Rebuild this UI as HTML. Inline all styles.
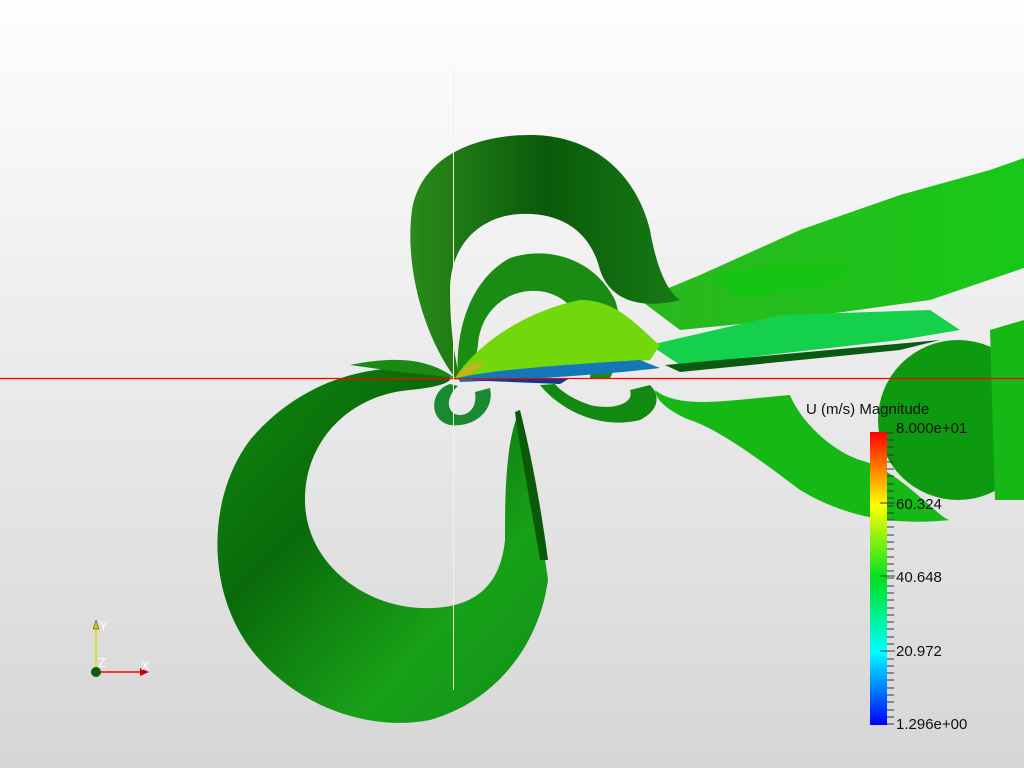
<!DOCTYPE html>
<html><head><meta charset="utf-8"><style>
html,body{margin:0;padding:0}
body{width:1024px;height:768px;overflow:hidden;background:linear-gradient(#fefefe,#d6d6d6);font-family:"Liberation Sans",sans-serif}
svg{position:absolute;left:0;top:0}
.t{font-size:15px;fill:#111}
</style></head><body>
<svg width="1024" height="768" viewBox="0 0 1024 768">
<defs>
<linearGradient id="big" x1="0" y1="0" x2="1" y2="1">
<stop offset="0" stop-color="#0f8a0f"/><stop offset="0.35" stop-color="#0a6a0a"/><stop offset="0.7" stop-color="#18a018"/><stop offset="1" stop-color="#10901a"/></linearGradient>
<linearGradient id="top" x1="0" y1="0" x2="1" y2="0">
<stop offset="0" stop-color="#2a8a1a"/><stop offset="0.5" stop-color="#0a5a0a"/><stop offset="1" stop-color="#177a15"/></linearGradient>
<linearGradient id="wake" x1="0" y1="0" x2="1" y2="0">
<stop offset="0" stop-color="#2ab81e"/><stop offset="1" stop-color="#18c818"/></linearGradient>
<linearGradient id="bar" x1="0" y1="1" x2="0" y2="0">
<stop offset="0" stop-color="#0000ff"/><stop offset="0.25" stop-color="#00ffff"/><stop offset="0.5" stop-color="#00e020"/><stop offset="0.75" stop-color="#ffff00"/><stop offset="1" stop-color="#ff0000"/></linearGradient>
</defs>
<path d="M640 300 L700 275 L800 230 L900 195 L990 170 L1024 158 L1024 268 L930 300 L800 318 L680 330 Z" fill="url(#wake)"/>
<path d="M712 278 C750 262 820 262 858 268 L830 285 L740 298 Z" fill="#16c414"/>
<path d="M650 345 L780 315 L930 310 L960 330 L900 340 L680 365 Z" fill="#14d04a"/>
<path d="M665 365 L940 340 L900 350 L680 372 Z" fill="#0a5a12"/>
<path d="M655 390 C680 410 730 400 790 395 C800 420 830 450 860 460 C900 470 940 520 950 520 C900 525 850 520 800 490 C760 460 720 430 690 420 C670 412 655 400 655 390 Z" fill="#16b816"/>
<circle cx="958" cy="420" r="80" fill="#0e9a10"/>
<path d="M990 330 L1024 320 L1024 500 L995 500 Z" fill="#16b816"/>
<path fill-rule="evenodd" fill="url(#big)" d="M450 375 C380 355 300 380 250 440 C205 500 205 600 260 660 C310 715 380 730 430 720 C500 700 540 640 548 580 C540 520 528 470 520 410 C505 440 505 500 505 540 C500 590 470 610 420 608 C360 605 305 560 305 500 C305 440 350 395 410 390 C430 388 445 385 450 380 Z"/>
<path d="M350 365 C400 355 430 360 455 378 L400 372 Z" fill="#1a8a14"/>
<path fill-rule="evenodd" fill="url(#top)" d="M455 378 C420 330 405 260 412 210 C420 160 470 135 530 135 C590 135 635 170 650 230 C655 260 665 290 680 300 C640 310 610 300 600 270 C590 230 560 212 520 214 C480 216 450 245 450 290 C450 330 455 360 460 378 Z"/>
<path fill-rule="evenodd" fill="#1a8c14" d="M458 378 C455 330 470 280 510 258 C550 245 595 260 615 300 C625 330 620 360 610 378 L590 378 C595 340 580 300 545 292 C510 285 480 310 478 345 C476 360 470 372 465 378 Z"/>
<path d="M455 378 C480 340 530 310 580 300 C620 300 640 330 660 345 L650 360 C600 365 520 372 455 380 Z" fill="#72d80c"/>
<path d="M458 378 C490 370 560 365 640 360 L660 368 C600 375 520 380 460 382 Z" fill="#1478b8"/>
<path d="M462 380 L570 378 L560 384 Z" fill="#0a3a8a"/>
<path d="M455 378 C465 365 475 362 485 362 L470 374 Z" fill="#c8b020"/>
<path fill-rule="evenodd" fill="#1a8a30" d="M450 384 C430 390 428 420 450 425 C475 428 495 410 490 388 L475 392 C478 410 465 418 455 414 C445 408 448 395 458 386 Z"/>
<path d="M520 410 C530 450 540 500 548 560 L540 560 C530 500 520 450 515 412 Z" fill="#0a5a0a"/>
<path fill-rule="evenodd" fill="#128a12" d="M540 385 C560 410 600 430 640 420 C660 410 660 395 650 385 L630 390 C635 405 610 410 590 405 C570 398 560 390 555 384 Z"/>
<line x1="0" y1="378.5" x2="1024" y2="378.5" stroke="#ff0000" stroke-width="1.3"/>
<line x1="453.5" y1="68" x2="453.5" y2="690" stroke="#f4f4d0" stroke-width="1"/>
<text x="806" y="414" class="t">U (m/s) Magnitude</text>
<rect x="870" y="432" width="17" height="293" fill="url(#bar)"/>
<g stroke="#333" stroke-width="1">
<line x1="887" y1="433" x2="894" y2="433"/><line x1="887" y1="440" x2="894" y2="440"/><line x1="887" y1="447" x2="894" y2="447"/><line x1="887" y1="455" x2="894" y2="455"/><line x1="887" y1="462" x2="894" y2="462"/><line x1="887" y1="469" x2="894" y2="469"/><line x1="887" y1="476" x2="894" y2="476"/><line x1="887" y1="484" x2="894" y2="484"/><line x1="887" y1="491" x2="894" y2="491"/><line x1="887" y1="498" x2="894" y2="498"/><line x1="887" y1="506" x2="894" y2="506"/><line x1="887" y1="513" x2="894" y2="513"/><line x1="887" y1="520" x2="894" y2="520"/><line x1="887" y1="527" x2="894" y2="527"/><line x1="887" y1="535" x2="894" y2="535"/><line x1="887" y1="542" x2="894" y2="542"/><line x1="887" y1="549" x2="894" y2="549"/><line x1="887" y1="557" x2="894" y2="557"/><line x1="887" y1="564" x2="894" y2="564"/><line x1="887" y1="571" x2="894" y2="571"/><line x1="887" y1="578" x2="894" y2="578"/><line x1="887" y1="586" x2="894" y2="586"/><line x1="887" y1="593" x2="894" y2="593"/><line x1="887" y1="600" x2="894" y2="600"/><line x1="887" y1="608" x2="894" y2="608"/><line x1="887" y1="615" x2="894" y2="615"/><line x1="887" y1="622" x2="894" y2="622"/><line x1="887" y1="629" x2="894" y2="629"/><line x1="887" y1="637" x2="894" y2="637"/><line x1="887" y1="644" x2="894" y2="644"/><line x1="887" y1="651" x2="894" y2="651"/><line x1="887" y1="659" x2="894" y2="659"/><line x1="887" y1="666" x2="894" y2="666"/><line x1="887" y1="673" x2="894" y2="673"/><line x1="887" y1="680" x2="894" y2="680"/><line x1="887" y1="688" x2="894" y2="688"/><line x1="887" y1="695" x2="894" y2="695"/><line x1="887" y1="702" x2="894" y2="702"/><line x1="887" y1="710" x2="894" y2="710"/><line x1="887" y1="717" x2="894" y2="717"/><line x1="887" y1="724" x2="894" y2="724"/>
<line x1="880" y1="503" x2="895" y2="503"/><line x1="880" y1="576" x2="895" y2="576"/><line x1="880" y1="651" x2="895" y2="651"/>
</g>
<text x="896" y="433" class="t">8.000e+01</text>
<text x="896" y="509" class="t">60.324</text>
<text x="896" y="582" class="t">40.648</text>
<text x="896" y="656" class="t">20.972</text>
<text x="896" y="729" class="t">1.296e+00</text>
<line x1="96" y1="672" x2="96" y2="628" stroke="#e0e000" stroke-width="1.5"/>
<polygon points="93,629 96,620 99,629" fill="#d4c800" stroke="#333" stroke-width="0.5"/>
<line x1="100" y1="672" x2="142" y2="672" stroke="#ff0000" stroke-width="1.5"/>
<polygon points="140,668 149,672 140,676" fill="#d00000"/>
<circle cx="96" cy="672" r="5" fill="#0a6010"/>
<text x="99" y="630" fill="#fff" font-size="13">Y</text>
<text x="98" y="667" fill="#fff" font-size="13">Z</text>
<text x="141" y="670" fill="#fff" font-size="13">X</text>
</svg>
</body></html>
